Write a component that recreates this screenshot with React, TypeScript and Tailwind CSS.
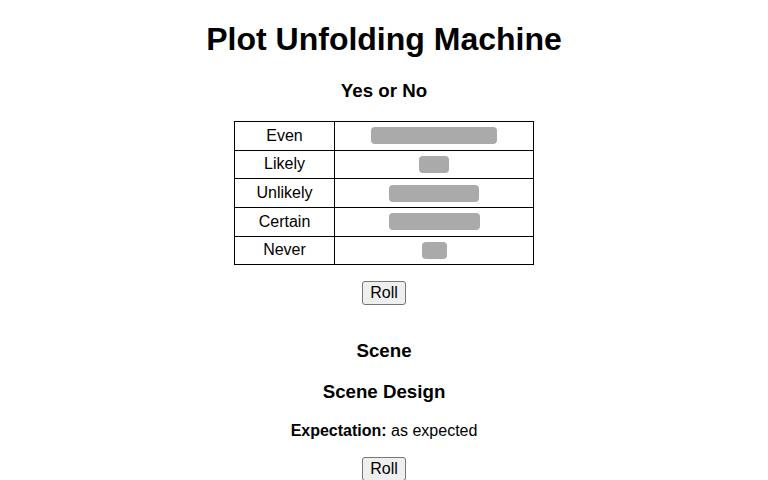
const odds = [
  { label: 'Even', width: 126 },
  { label: 'Likely', width: 30 },
  { label: 'Unlikely', width: 90 },
  { label: 'Certain', width: 91 },
  { label: 'Never', width: 25 },
]

function RollButton() {
  return (
    <button className="h-[24px] rounded-[3px] border border-[#767676] bg-[#efefef] px-[7px] text-[16px] leading-[18px] text-black">
      Roll
    </button>
  )
}

export default function App() {
  return (
    <div className="flex min-h-[480px] flex-col items-center bg-white text-black [font-family:'Liberation_Sans',Arial,sans-serif]">
      <h1 className="mt-[21.44px] text-[32px] font-bold leading-[36.8px]">Plot Unfolding Machine</h1>

      <h3 className="mt-[21.44px] text-[18.72px] font-bold leading-[21.5px]">Yes or No</h3>

      <table className="mt-[19.8px] w-[300px] border-collapse text-[16px]">
        <tbody>
          {odds.map((row) => (
            <tr key={row.label} className="h-[28.7px]">
              <td className="w-[100px] border border-black p-0 text-center leading-[18.4px]">{row.label}</td>
              <td className="border border-black p-0">
                <div className="flex items-center justify-center">
                  <div className="h-[17px] rounded-[4px] bg-[#aaaaaa]" style={{ width: row.width }} />
                </div>
              </td>
            </tr>
          ))}
        </tbody>
      </table>

      <div className="mt-[16px]">
        <RollButton />
      </div>

      <h3 className="mt-[35px] text-[18.72px] font-bold leading-[21.5px]">Scene</h3>

      <h3 className="mt-[19.5px] text-[18.72px] font-bold leading-[21.5px]">Scene Design</h3>

      <p className="mt-[19.5px] text-[16px] leading-[18.4px]">
        <b>Expectation:</b> as expected
      </p>

      <div className="mt-[16.6px]">
        <RollButton />
      </div>
    </div>
  )
}
